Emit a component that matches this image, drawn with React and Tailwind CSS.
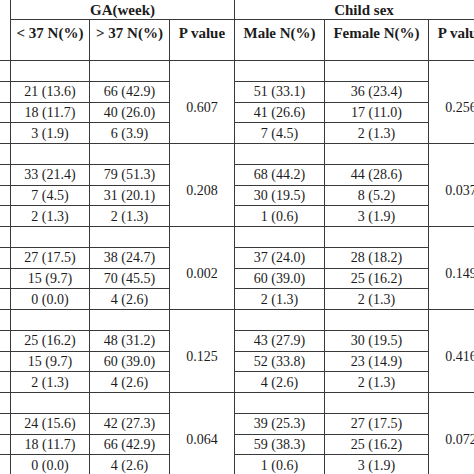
import React from "react";

const grupos = [
  {
    p: "0.607",
    p2: "0.256",
    filas: [
      ["21 (13.6)", "66 (42.9)", "51 (33.1)", "36 (23.4)"],
      ["18 (11.7)", "40 (26.0)", "41 (26.6)", "17 (11.0)"],
      ["3 (1.9)", "6 (3.9)", "7 (4.5)", "2 (1.3)"],
    ],
  },
  {
    p: "0.208",
    p2: "0.037",
    filas: [
      ["33 (21.4)", "79 (51.3)", "68 (44.2)", "44 (28.6)"],
      ["7 (4.5)", "31 (20.1)", "30 (19.5)", "8 (5.2)"],
      ["2 (1.3)", "2 (1.3)", "1 (0.6)", "3 (1.9)"],
    ],
  },
  {
    p: "0.002",
    p2: "0.149",
    filas: [
      ["27 (17.5)", "38 (24.7)", "37 (24.0)", "28 (18.2)"],
      ["15 (9.7)", "70 (45.5)", "60 (39.0)", "25 (16.2)"],
      ["0 (0.0)", "4 (2.6)", "2 (1.3)", "2 (1.3)"],
    ],
  },
  {
    p: "0.125",
    p2: "0.416",
    filas: [
      ["25 (16.2)", "48 (31.2)", "43 (27.9)", "30 (19.5)"],
      ["15 (9.7)", "60 (39.0)", "52 (33.8)", "23 (14.9)"],
      ["2 (1.3)", "4 (2.6)", "4 (2.6)", "2 (1.3)"],
    ],
  },
  {
    p: "0.064",
    p2: "0.072",
    filas: [
      ["24 (15.6)", "42 (27.3)", "39 (25.3)", "27 (17.5)"],
      ["18 (11.7)", "66 (42.9)", "59 (38.3)", "25 (16.2)"],
      ["0 (0.0)", "4 (2.6)", "1 (0.6)", "3 (1.9)"],
    ],
  },
];

const celda = "border-r border-b border-[#3a3a3a] flex justify-center";

const App = () => {
  return (
    <div className="w-[474px] h-[474px] overflow-hidden bg-white text-[#1c1c1c] font-['Liberation_Serif',serif] text-[14px]">
      <div className="grid w-[493px] grid-cols-[11px_79px_80px_65px_90px_104px_65px] grid-rows-[20px_41px_repeat(20,20.75px)]">
        {/* Encabezado */}
        <div className={`${celda} row-span-2`}></div>
        <div className={`${celda} col-span-3 items-center pt-[2px] font-bold text-[15px]`}>GA(week)</div>
        <div className={`${celda} col-span-3 items-center pt-[2px] font-bold text-[15px]`}>Child sex</div>
        <div className={`${celda} items-start pt-[3px] font-bold text-[15px] leading-[20px]`}>&lt; 37 N(%)</div>
        <div className={`${celda} items-start pt-[3px] font-bold text-[15px] leading-[20px]`}>&gt; 37 N(%)</div>
        <div className={`${celda} items-start pt-[3px] font-bold text-[15px] leading-[20px]`}>P value</div>
        <div className={`${celda} items-start pt-[3px] font-bold text-[15px] leading-[20px]`}>Male N(%)</div>
        <div className={`${celda} items-start pt-[3px] font-bold text-[15px] leading-[20px]`}>Female N(%)</div>
        <div className={`${celda} items-start pt-[3px] font-bold text-[15px] leading-[20px] whitespace-nowrap`}>P value</div>

        {/* Grupos */}
        {grupos.map((g, gi) => (
          <React.Fragment key={gi}>
            <div className={celda}></div>
            <div className={celda}></div>
            <div className={celda}></div>
            <div className={`${celda} row-span-4 items-center pt-[10px]`}>{g.p}</div>
            <div className={celda}></div>
            <div className={celda}></div>
            <div className={`${celda} row-span-4 items-center pt-[10px]`}>{g.p2}</div>
            {g.filas.map((f, fi) => (
              <React.Fragment key={fi}>
                <div className={celda}></div>
                {f.map((v, vi) => (
                  <div key={vi} className={`${celda} items-center whitespace-nowrap`}>
                    {v}
                  </div>
                ))}
              </React.Fragment>
            ))}
          </React.Fragment>
        ))}
      </div>
    </div>
  );
};

export default App;
